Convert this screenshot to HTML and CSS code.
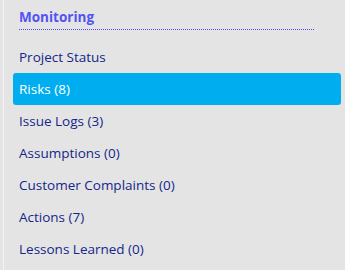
FILE: index.html
```html
<!DOCTYPE html>
<html>
<head>
<meta charset="utf-8">
<link rel="stylesheet" href="styles.css">
</head>
<body>
<div class="panel">
  <div class="heading">Monitoring</div>
  <ul class="menu">
    <li class="item">Project Status</li>
    <li class="item active">Risks (8)</li>
    <li class="item">Issue Logs (3)</li>
    <li class="item">Assumptions (0)</li>
    <li class="item">Customer Complaints (0)</li>
    <li class="item">Actions (7)</li>
    <li class="item">Lessons Learned (0)</li>
  </ul>
</div>
</body>
</html>
```
FILE: styles.css
```css
html, body {
  margin: 0;
  padding: 0;
  background: #e4e4e4;
  height: 100%;
}
body {
  font-family: "Open Sans", "Noto Sans", sans-serif;
  font-size: 13px;
}
.panel {
  margin-left: 3px;
  border-left: 1px solid #f4f4f4;
  padding: 6px 4px 0 9px;
  min-height: 264px;
}
.heading {
  margin: 0 27px 0 6px;
  height: 23px;
  line-height: 22px;
  font-size: 13.5px;
  font-weight: 700;
  color: #5353f4;
  border-bottom: 1px dotted #4a4af0;
}
.menu {
  list-style: none;
  margin: 11px 0 0 0;
  padding: 0;
}
.item {
  height: 32px;
  line-height: 33px;
  padding-left: 6px;
  font-size: 13.5px;
  font-weight: 500;
  color: #14268a;
  border-radius: 3px;
}
.item.active {
  background: #00aeef;
  color: #ffffff;
}
```
